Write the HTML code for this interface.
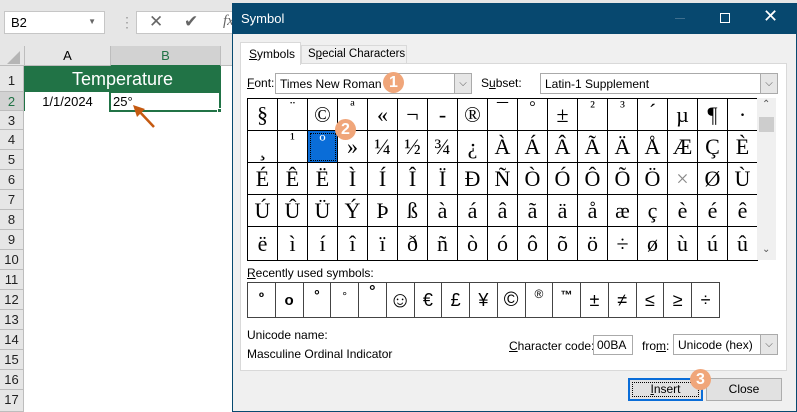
<!DOCTYPE html><html><head><style>
*{box-sizing:border-box;margin:0;padding:0}
body{width:797px;height:412px;overflow:hidden;background:#fff;font-family:"Liberation Sans",sans-serif;position:relative;font-size:12px}
.a{position:absolute}
.rh{position:absolute;left:0;width:24px;background:#e6e6e6;border-bottom:1px solid #bdbdbd;border-right:1px solid #bdbdbd;text-align:center;font-size:13px;color:#222}
.g{position:absolute;left:247px;top:98px;border:1px solid #808080;border-collapse:collapse}
.g td{width:30px;height:32px;border:1px solid #000;text-align:center;font-family:"Liberation Serif",serif;font-size:22px;padding:0}
.r td{width:27.8px;height:35px;border:1px solid #444;text-align:center;font-size:18px;padding:0}
.lbl{position:absolute;font-size:12px;color:#000;white-space:nowrap}
.cb{position:absolute;background:#fff;border:1px solid #aaa;font-size:12px;padding:3px 4px;white-space:nowrap}
.dd{position:absolute;right:0;top:0;bottom:0;width:17px;background:#e6e6e6;border-left:1px solid #aaa;color:#555;text-align:center;font-size:10px;line-height:19px}
.m{position:absolute;width:21px;height:21px;border-radius:50%;background:#f0a67a;color:#fff;font-weight:bold;font-size:16px;text-align:center;line-height:21px}
</style></head><body>
<div class="a" style="left:0;top:0;width:797px;height:46px;background:#e6e6e6"></div>
<div class="a" style="left:4px;top:11px;width:101px;height:23px;background:#fff;border:1px solid #c6c6c6;padding:3px 6px;font-size:13px">B2<span style="position:absolute;right:8px;top:5px;font-size:8px;color:#666">▼</span></div>
<div class="a" style="left:120px;top:14px;color:#999;font-size:14px">⋮</div>
<div class="a" style="left:136px;top:11px;width:110px;height:23px;background:#fff;border:1px solid #c6c6c6;color:#666;font-size:17px"><span style="position:absolute;left:12px;top:0">✕</span><span style="position:absolute;left:47px;top:0">✔</span><span style="position:absolute;left:86px;top:1px;font-style:italic;font-family:'Liberation Serif';font-size:15px">fx</span></div>
<div class="a" style="left:0;top:46px;width:232px;height:20px;background:#e6e6e6;border-bottom:1px solid #bdbdbd"></div>
<div class="a" style="left:24px;top:46px;width:86px;height:20px;border-left:1px solid #bdbdbd;text-align:center;font-size:13px;line-height:20px">A</div>
<div class="a" style="left:110px;top:46px;width:111px;height:21px;background:#d2d2d2;border-left:1px solid #bdbdbd;border-right:1px solid #bdbdbd;border-bottom:2px solid #217346;text-align:center;font-size:13px;line-height:20px;color:#217346">B</div>
<div class="a" style="left:7px;top:51px;width:0;height:0;border-left:13px solid transparent;border-bottom:13px solid #b5b5b5"></div>
<div class="rh" style="top:66px;height:26px;line-height:30px">1</div>
<div class="rh" style="top:92px;height:19px;line-height:19px;background:#d2d2d2;color:#217346">2</div>
<div class="rh" style="top:111px;height:19px;line-height:19px">3</div>
<div class="rh" style="top:130px;height:20px;line-height:20px">4</div>
<div class="rh" style="top:150px;height:20px;line-height:20px">5</div>
<div class="rh" style="top:170px;height:20px;line-height:20px">6</div>
<div class="rh" style="top:190px;height:20px;line-height:20px">7</div>
<div class="rh" style="top:210px;height:20px;line-height:20px">8</div>
<div class="rh" style="top:230px;height:20px;line-height:20px">9</div>
<div class="rh" style="top:250px;height:20px;line-height:20px">10</div>
<div class="rh" style="top:270px;height:20px;line-height:20px">11</div>
<div class="rh" style="top:290px;height:20px;line-height:20px">12</div>
<div class="rh" style="top:310px;height:20px;line-height:20px">13</div>
<div class="rh" style="top:330px;height:20px;line-height:20px">14</div>
<div class="rh" style="top:350px;height:20px;line-height:20px">15</div>
<div class="rh" style="top:370px;height:20px;line-height:20px">16</div>
<div class="rh" style="top:390px;height:22px;line-height:20px">17</div>
<div class="a" style="left:24px;top:66px;width:197px;height:26px;background:#217346;color:#fff;font-size:18px;text-align:center;line-height:26px">Temperature</div>
<div class="a" style="left:24px;top:92px;width:86px;height:19px;text-align:center;font-size:13px;line-height:19px;border-left:1px solid #217346">1/1/2024</div>
<div class="a" style="left:109px;top:91px;width:112px;height:21px;border:2px solid #217346;font-size:13px;padding-left:2px;line-height:17px">25°</div>
<div class="a" style="left:217px;top:108px;width:5px;height:5px;background:#217346;border:1px solid #fff"></div>
<svg class="a" style="left:128px;top:100px" width="30" height="30"><line x1="26" y1="27" x2="10" y2="10" stroke="#c55a11" stroke-width="2.5"/><polygon points="5,5 17,9 9,17" fill="#c55a11"/></svg>
<!-- dialog -->
<div class="a" style="left:232px;top:3px;width:565px;height:409px;background:#f0f0f0;border:1px solid #074a70"></div>
<div class="a" style="left:232px;top:3px;width:565px;height:31px;background:#07486f;color:#fff;font-size:13px;padding:8px 9px">Symbol</div>
<div class="a" style="left:675px;top:18px;width:10px;height:1px;background:#3f6f8e"></div>
<div class="a" style="left:720px;top:13px;width:10px;height:10px;border:1px solid #fff"></div>
<div class="a" style="left:763px;top:6px;color:#fff;font-size:18px">✕</div>
<div class="a" style="left:240px;top:63px;width:547px;height:308px;background:#fff;border:1px solid #d9d9d9"></div>
<div class="a" style="left:240px;top:42px;width:61px;height:23px;background:#fff;border:1px solid #d9d9d9;border-bottom:none;padding:4px 0 0 8px"><u>S</u>ymbols</div>
<div class="a" style="left:301px;top:45px;width:106px;height:18px;background:#f0f0f0;border:1px solid #d9d9d9;border-bottom:none;padding:2px 0 0 6px;white-space:nowrap;font-size:11.5px">S<u>p</u>ecial Characters</div>
<div class="lbl" style="left:247px;top:76px"><u>F</u>ont:</div>
<div class="cb" style="left:275px;top:73px;width:197px;height:21px">Times New Roman<div class="dd">⌵</div></div>
<div class="lbl" style="left:481px;top:76px">S<u>u</u>bset:</div>
<div class="cb" style="left:540px;top:73px;width:238px;height:21px">Latin-1 Supplement<div class="dd">⌵</div></div>
<table class="g">
<tr><td>§</td><td style="vertical-align:top;font-size:16px">¨</td><td>©</td><td style="vertical-align:top;font-size:16px">ª</td><td>«</td><td>¬</td><td>-</td><td>®</td><td style="vertical-align:top">¯</td><td style="vertical-align:top;font-size:16px">°</td><td>±</td><td style="vertical-align:top;font-size:16px">²</td><td style="vertical-align:top;font-size:16px">³</td><td style="vertical-align:top">´</td><td>µ</td><td>¶</td><td>·</td></tr>
<tr><td style="vertical-align:bottom">¸</td><td style="vertical-align:top;font-size:16px">¹</td><td style="background:#0a6dd8;color:#fff;outline:1px dotted #000;outline-offset:-3px;vertical-align:top;font-size:20px">º</td><td>»</td><td>¼</td><td>½</td><td>¾</td><td>¿</td><td>À</td><td>Á</td><td>Â</td><td>Ã</td><td>Ä</td><td>Å</td><td>Æ</td><td>Ç</td><td>È</td></tr>
<tr><td>É</td><td>Ê</td><td>Ë</td><td>Ì</td><td>Í</td><td>Î</td><td>Ï</td><td>Ð</td><td>Ñ</td><td>Ò</td><td>Ó</td><td>Ô</td><td>Õ</td><td>Ö</td><td style="color:#888">×</td><td>Ø</td><td>Ù</td></tr>
<tr><td>Ú</td><td>Û</td><td>Ü</td><td>Ý</td><td>Þ</td><td>ß</td><td>à</td><td>á</td><td>â</td><td>ã</td><td>ä</td><td>å</td><td>æ</td><td>ç</td><td>è</td><td>é</td><td>ê</td></tr>
<tr><td style="height:34px">ë</td><td>ì</td><td>í</td><td>î</td><td>ï</td><td>ð</td><td>ñ</td><td>ò</td><td>ó</td><td>ô</td><td>õ</td><td>ö</td><td>÷</td><td>ø</td><td>ù</td><td>ú</td><td>û</td></tr>
</table>
<div class="a" style="left:757px;top:98px;width:19px;height:162px;background:#f0f0f0"></div>
<div class="a" style="left:759px;top:117px;width:15px;height:15px;background:#cdcdcd"></div>
<div class="a" style="left:762px;top:99px;font-size:10px;color:#555">⌃</div>
<div class="a" style="left:762px;top:244px;font-size:10px;color:#555">⌄</div>
<div class="lbl" style="left:247px;top:266px"><u>R</u>ecently used symbols:</div>
<table class="r a" style="left:247px;top:282px;border-collapse:collapse;border:1px solid #808080;width:473px"><tr>
<td style="font-size:14px;font-weight:bold;vertical-align:top;padding-top:6px">º</td><td style="font-size:15px;font-weight:bold">o</td><td style="vertical-align:top;font-size:14px;font-weight:bold;padding-top:4px">°</td><td style="vertical-align:top;font-size:12px;padding-top:6px">°</td><td style="vertical-align:top;font-size:16px;font-weight:bold">°</td><td style="font-size:22px">☺</td><td>€</td><td>£</td><td>¥</td><td style="font-size:20px">©</td><td style="vertical-align:top;font-size:12px;padding-top:4px">®</td><td style="vertical-align:top;font-size:12px;font-weight:bold;padding-top:5px">™</td><td>±</td><td>≠</td><td>≤</td><td>≥</td><td>÷</td></tr></table>
<div class="lbl" style="left:247px;top:328px">Unicode name:</div>
<div class="lbl" style="left:247px;top:347px">Masculine Ordinal Indicator</div>
<div class="lbl" style="left:509px;top:339px"><u>C</u>haracter code:</div>
<div class="cb" style="left:593px;top:335px;width:40px;height:20px;padding:2px 3px">00BA</div>
<div class="lbl" style="left:642px;top:339px">fro<u>m</u>:</div>
<div class="cb" style="left:673px;top:334px;width:105px;height:21px;padding:3px 4px">Unicode (hex)<div class="dd">⌵</div></div>
<div class="a" style="left:628px;top:378px;width:75px;height:23px;border:2px solid #0a6dd8;background:#e1e1e1;text-align:center;line-height:19px;font-size:12px"><div style="position:absolute;inset:2px;border:1px dotted #000"></div><u>I</u>nsert</div>
<div class="a" style="left:706px;top:378px;width:76px;height:23px;border:1px solid #adadad;background:#e1e1e1;text-align:center;line-height:21px">Close</div>
<div class="m" style="left:383px;top:72px">1</div>
<div class="m" style="left:335px;top:119px">2</div>
<div class="m" style="left:690px;top:369px">3</div>
</body></html>
